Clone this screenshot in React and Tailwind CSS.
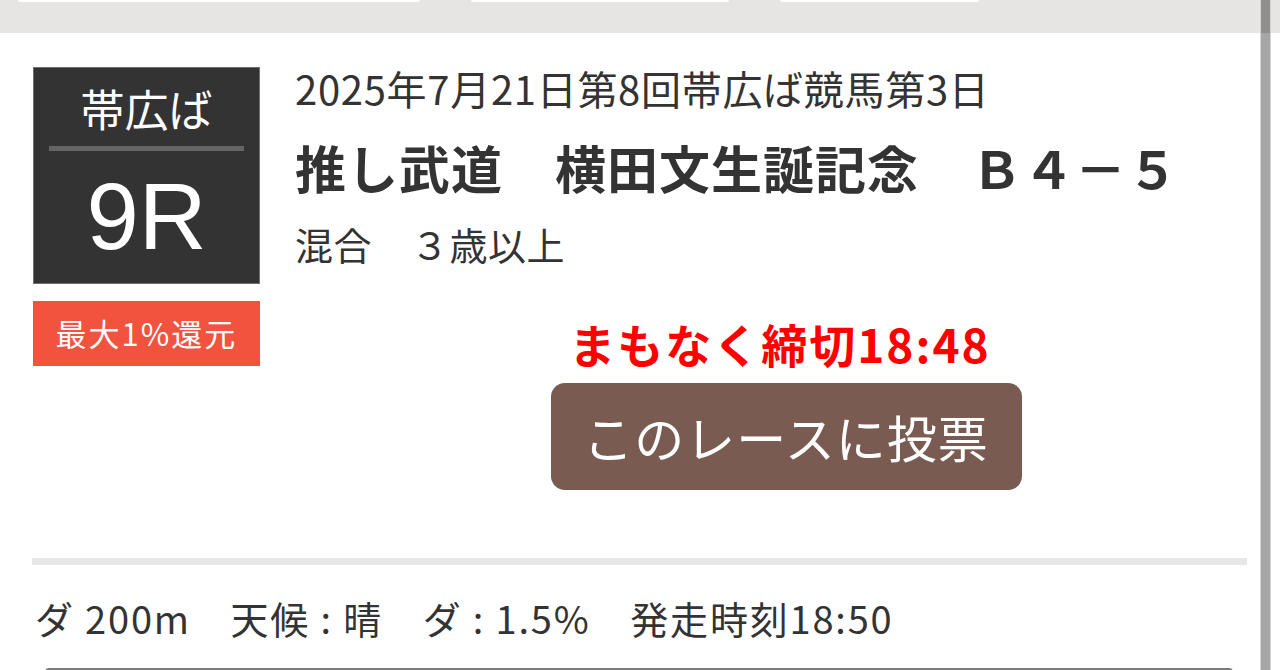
const jp = { fontFamily: '"Noto Sans CJK JP", "Noto Sans", sans-serif' }
const latin = { fontFamily: '"Liberation Sans", Arial, "Noto Sans CJK JP", sans-serif' }

const TopTabs = () => (
  <div className="h-[33px] bg-[#e6e5e3] flex items-start pl-[18px] gap-[51px]">
    <div className="w-[402px] h-[2px] bg-white rounded-b" />
    <div className="w-[258px] h-[2px] bg-white rounded-b" />
    <div className="w-[199px] h-[2px] bg-white rounded-b" />
  </div>
)

const RaceBadge = () => (
  <div className="w-[227px] shrink-0">
    <div className="h-[217px] bg-[#333333] border border-[#6f6f6f] flex flex-col items-center text-white">
      <div className="mt-[13px] text-[44px] leading-[54px]" style={jp}>
        帯広ば
      </div>
      <div className="mt-[11px] w-[195px] h-[5px] bg-[#646464]" />
      <div className="mt-[16px] text-[94px] leading-[100px]" style={latin}>
        9R
      </div>
    </div>
    <div
      className="mt-[17px] h-[65px] bg-[#f1533f] text-white text-[31px] tracking-[2px] flex items-center justify-center"
      style={jp}
    >
      最大1%還元
    </div>
  </div>
)

export default function App() {
  return (
    <div className="relative w-[1280px] h-[670px] overflow-hidden bg-white text-[#333333]" style={jp}>
      <TopTabs />

      <div className="pl-[33px] pr-[33px] pt-[34px]">
        <div className="flex items-start">
          <RaceBadge />
          <div className="flex-1 ml-[35px] -mt-[3px]">
            <div className="text-[40px] leading-[48px] tracking-[0.7px] whitespace-nowrap">
              2025年7月21日第8回帯広ば競馬第3日
            </div>
            <div className="mt-[28px] text-[51px] leading-[54px] tracking-[1px] font-bold whitespace-nowrap">
              推し武道　横田文生誕記念　Ｂ４－５
            </div>
            <div className="mt-[26px] text-[38px] leading-[48px] tracking-[0.6px] whitespace-nowrap">
              混合　３歳以上
            </div>

            <div className="flex flex-col items-center pl-[30px] mt-[47px]">
              <div className="pr-[12px] text-[#ff0000] font-bold text-[46px] leading-[56px] tracking-[2px] whitespace-nowrap">
                まもなく締切18:48
              </div>
              <button className="mt-[12px] w-[471px] h-[107px] rounded-[14px] bg-[#795b51] text-white text-[50px] tracking-[1px]">
                このレースに投票
              </button>
            </div>
          </div>
        </div>
      </div>

      <div className="mx-[32px] w-[1215px] mt-[68px] h-[7px] bg-[#e7e7e7]" />

      <div className="ml-[35px] mt-[29px] text-[38px] leading-[48px] tracking-[1.8px] whitespace-nowrap">
        ダ 200m　天候 : 晴　ダ : 1.5%　発走時刻18:50
      </div>

      <div className="mx-[45px] w-[1188px] mt-[26px] h-[6px] border-t-2 border-x-2 border-[#7a7a7a] rounded-t" />

      <div className="absolute top-0 right-[9px] w-[11px] h-[670px] bg-[#a6a6a6] border-x border-[#d4d4d4]">
        <div className="h-[33px] bg-[#8f8f8f]" />
      </div>
    </div>
  )
}
